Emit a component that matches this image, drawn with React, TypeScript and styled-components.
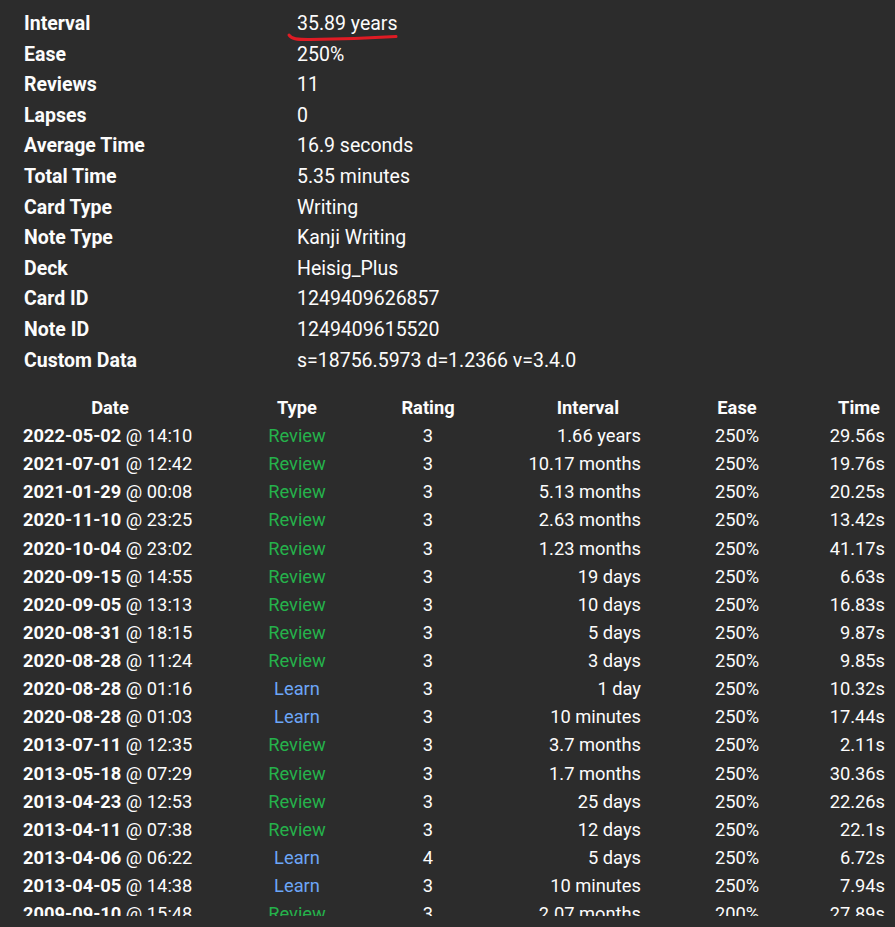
import React from "react";
import styled, { createGlobalStyle } from "styled-components";

const GlobalStyle = createGlobalStyle`
  html, body { margin: 0; padding: 0; background: #2c2c2c; }
  body { color: #fcfcfc; font-family: Roboto, "Liberation Sans", sans-serif; }
`;

const Page = styled.div`
  height: 916px;
  overflow: hidden;
  padding: 8.2px 0 0 23px;
  box-sizing: border-box;
  background: #2c2c2c;
`;

const InfoGrid = styled.div`
  display: grid;
  grid-template-columns: 274px auto;
  grid-auto-rows: 30.6px;
  align-items: center;
  font-size: 19.5px;
  white-space: nowrap;
`;

const InfoLabel = styled.div`
  font-weight: 700;
  padding-left: 1px;
`;

const InfoValue = styled.div`
  position: relative;
`;

const Scribble = styled.svg`
  position: absolute;
  left: -17px;
  top: 16px;
  width: 125px;
  height: 16px;
  overflow: visible;
  pointer-events: none;
`;

const RevlogGrid = styled.div`
  margin-top: 18px;
  display: grid;
  grid-template-columns: 174px 200px 62px 182px 192px 52px;
  grid-auto-rows: 28.125px;
  align-items: center;
  font-size: 18.3px;
  white-space: nowrap;
`;

type Align = "left" | "center" | "right";

const HeadCell = styled.div<{ $align: Align; $padRight?: number }>`
  font-weight: 700;
  text-align: ${p => p.$align};
  padding-right: ${p => p.$padRight ?? 0}px;
`;

const Cell = styled.div<{ $align: Align }>`
  display: flex;
  justify-content: ${p => (p.$align === "left" ? "flex-start" : p.$align === "right" ? "flex-end" : "center")};
`;

const DatePart = styled.span`
  font-weight: 700;
`;

const TypeText = styled.span<{ $kind: "Review" | "Learn" }>`
  color: ${p => (p.$kind === "Review" ? "#25b24b" : "#6ca6f7")};
`;

const info: [string, string][] = [
  ["Interval", "35.89 years"],
  ["Ease", "250%"],
  ["Reviews", "11"],
  ["Lapses", "0"],
  ["Average Time", "16.9 seconds"],
  ["Total Time", "5.35 minutes"],
  ["Card Type", "Writing"],
  ["Note Type", "Kanji Writing"],
  ["Deck", "Heisig_Plus"],
  ["Card ID", "1249409626857"],
  ["Note ID", "1249409615520"],
  ["Custom Data", "s=18756.5973 d=1.2366 v=3.4.0"],
];

type Rev = [string, string, "Review" | "Learn", string, string, string, string];

const revlog: Rev[] = [
  ["2022-05-02", "14:10", "Review", "3", "1.66 years", "250%", "29.56s"],
  ["2021-07-01", "12:42", "Review", "3", "10.17 months", "250%", "19.76s"],
  ["2021-01-29", "00:08", "Review", "3", "5.13 months", "250%", "20.25s"],
  ["2020-11-10", "23:25", "Review", "3", "2.63 months", "250%", "13.42s"],
  ["2020-10-04", "23:02", "Review", "3", "1.23 months", "250%", "41.17s"],
  ["2020-09-15", "14:55", "Review", "3", "19 days", "250%", "6.63s"],
  ["2020-09-05", "13:13", "Review", "3", "10 days", "250%", "16.83s"],
  ["2020-08-31", "18:15", "Review", "3", "5 days", "250%", "9.87s"],
  ["2020-08-28", "11:24", "Review", "3", "3 days", "250%", "9.85s"],
  ["2020-08-28", "01:16", "Learn", "3", "1 day", "250%", "10.32s"],
  ["2020-08-28", "01:03", "Learn", "3", "10 minutes", "250%", "17.44s"],
  ["2013-07-11", "12:35", "Review", "3", "3.7 months", "250%", "2.11s"],
  ["2013-05-18", "07:29", "Review", "3", "1.7 months", "250%", "30.36s"],
  ["2013-04-23", "12:53", "Review", "3", "25 days", "250%", "22.26s"],
  ["2013-04-11", "07:38", "Review", "3", "12 days", "250%", "22.1s"],
  ["2013-04-06", "06:22", "Learn", "4", "5 days", "250%", "6.72s"],
  ["2013-04-05", "14:38", "Learn", "3", "10 minutes", "250%", "7.94s"],
  ["2009-09-10", "15:48", "Review", "3", "2.07 months", "200%", "27.89s"],
];

export default function App() {
  return (
    <>
      <GlobalStyle />
      <Page>
        <InfoGrid>
          {info.map(([label, value], i) => (
            <React.Fragment key={label}>
              <InfoLabel>{label}</InfoLabel>
              <InfoValue>
                {value}
                {i === 0 && (
                  <Scribble viewBox="0 0 125 16">
                    <path
                      d="M9 7 C11 10.5 16 11.8 30 11.6 C55 11.4 90 10.2 116 8.6"
                      fill="none"
                      stroke="#e01b24"
                      strokeWidth="3"
                      strokeLinecap="round"
                    />
                  </Scribble>
                )}
              </InfoValue>
            </React.Fragment>
          ))}
        </InfoGrid>
        <RevlogGrid>
          <HeadCell $align="center">Date</HeadCell>
          <HeadCell $align="center">Type</HeadCell>
          <HeadCell $align="center">Rating</HeadCell>
          <HeadCell $align="right" $padRight={22}>Interval</HeadCell>
          <HeadCell $align="center">Ease</HeadCell>
          <HeadCell $align="center">Time</HeadCell>
          {revlog.map(([date, time, kind, rating, ivl, ease, took], i) => (
            <React.Fragment key={i}>
              <Cell $align="left">
                <span>
                  <DatePart>{date}</DatePart> @ {time}
                </span>
              </Cell>
              <Cell $align="center">
                <TypeText $kind={kind}>{kind}</TypeText>
              </Cell>
              <Cell $align="center">{rating}</Cell>
              <Cell $align="right">{ivl}</Cell>
              <Cell $align="center">{ease}</Cell>
              <Cell $align="right">{took}</Cell>
            </React.Fragment>
          ))}
        </RevlogGrid>
      </Page>
    </>
  );
}
